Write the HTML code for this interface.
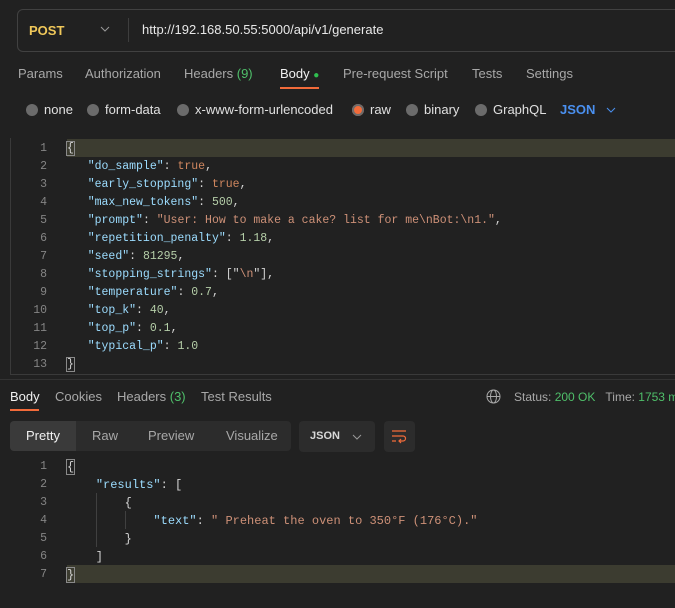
<!DOCTYPE html><html><head><style>
body{margin:0;width:675px;height:608px;background:#212121;font-family:"Liberation Sans",sans-serif;color:#c8c8c8;position:relative;overflow:hidden;font-size:13px}
.a{position:absolute;white-space:pre}
.m{font-family:"Liberation Mono",monospace;font-size:11.5px}
.k{color:#9cdcfe}.s{color:#ce9178}.n{color:#b5cea8}.t{color:#d0875f}.p{color:#d4d4d4}
.ln{color:#858585;text-align:right;width:30px}
.dot{display:inline-block;width:12px;height:12px;border-radius:50%;background:#6b6b6b;vertical-align:-2px;margin-right:6px}
.br{outline:1px solid #8a8a8a}
</style></head><body>
<div class="a" style="left:17px;top:9px;width:680px;height:41px;border:1px solid #414141;border-radius:6px"></div>
<div class="a" style="left:29px;top:23px;color:#f0c85a;font-weight:bold;font-size:13px">POST</div>
<svg class="a" style="left:100px;top:26px" width="10" height="7"><path d="M1 1l4 4 4-4" stroke="#999" fill="none"/></svg>
<div class="a" style="left:128px;top:18px;width:1px;height:24px;background:#3e3e3e"></div>
<div class="a" style="left:142px;top:22px;color:#e8e8e8;font-size:13px">http://192.168.50.55:5000/api/v1/generate</div>

<div class="a" style="left:18px;top:66px;color:#a8a8a8">Params</div>
<div class="a" style="left:85px;top:66px;color:#a8a8a8">Authorization</div>
<div class="a" style="left:184px;top:66px;color:#a8a8a8">Headers <span style="color:#4fbf6a">(9)</span></div>
<div class="a" style="left:280px;top:66px;color:#f0f0f0">Body <span style="color:#2fbf4f;font-size:10px">●</span></div>
<div class="a" style="left:280px;top:87px;width:39px;height:2px;background:#f26b3a"></div>
<div class="a" style="left:343px;top:66px;color:#a8a8a8">Pre-request Script</div>
<div class="a" style="left:472px;top:66px;color:#a8a8a8">Tests</div>
<div class="a" style="left:526px;top:66px;color:#a8a8a8">Settings</div>

<div class="a" style="left:26px;top:102px;color:#e0e0e0"><span class="dot"></span>none</div>
<div class="a" style="left:87px;top:102px;color:#e0e0e0"><span class="dot"></span>form-data</div>
<div class="a" style="left:177px;top:102px;color:#e0e0e0"><span class="dot"></span>x-www-form-urlencoded</div>
<div class="a" style="left:352px;top:102px;color:#e0e0e0"><span class="dot" style="background:#f26b3a;box-shadow:inset 0 0 0 2px #6b6b6b"></span>raw</div>
<div class="a" style="left:406px;top:102px;color:#e0e0e0"><span class="dot"></span>binary</div>
<div class="a" style="left:475px;top:102px;color:#e0e0e0"><span class="dot"></span>GraphQL</div>
<div class="a" style="left:560px;top:102px;color:#4a90f0;font-weight:bold">JSON</div>
<svg class="a" style="left:606px;top:107px" width="10" height="7"><path d="M1 1l4 4 4-4" stroke="#4a90f0" fill="none"/></svg>

<div class="a" style="left:10px;top:138px;width:680px;height:236px;border-left:1px solid #3a3a3a;border-bottom:1px solid #3a3a3a"></div>
<div class="a" style="left:67px;top:139px;width:610px;height:18px;background:#3c3c30"></div>
<div class="a" style="left:0;top:379px;width:675px;height:1px;background:#333"></div>
<div class="a m" style="left:17px;top:140px;line-height:18px"><div class="ln">1
2
3
4
5
6
7
8
9
10
11
12
13</div></div>
<div class="a m" style="left:67px;top:140px;line-height:18px"><span class="p br">{</span>
   <span class="k">"do_sample"</span><span class="p">: </span><span class="t">true</span><span class="p">,</span>
   <span class="k">"early_stopping"</span><span class="p">: </span><span class="t">true</span><span class="p">,</span>
   <span class="k">"max_new_tokens"</span><span class="p">: </span><span class="n">500</span><span class="p">,</span>
   <span class="k">"prompt"</span><span class="p">: </span><span class="s">"User: How to make a cake? list for me\nBot:\n1."</span><span class="p">,</span>
   <span class="k">"repetition_penalty"</span><span class="p">: </span><span class="n">1.18</span><span class="p">,</span>
   <span class="k">"seed"</span><span class="p">: </span><span class="n">81295</span><span class="p">,</span>
   <span class="k">"stopping_strings"</span><span class="p">: ["</span><span class="s">\n</span><span class="p">"],</span>
   <span class="k">"temperature"</span><span class="p">: </span><span class="n">0.7</span><span class="p">,</span>
   <span class="k">"top_k"</span><span class="p">: </span><span class="n">40</span><span class="p">,</span>
   <span class="k">"top_p"</span><span class="p">: </span><span class="n">0.1</span><span class="p">,</span>
   <span class="k">"typical_p"</span><span class="p">: </span><span class="n">1.0</span>
<span class="p br">}</span></div>

<div class="a" style="left:10px;top:389px;color:#f0f0f0">Body</div>
<div class="a" style="left:10px;top:409px;width:29px;height:2px;background:#f26b3a"></div>
<div class="a" style="left:55px;top:389px;color:#a8a8a8">Cookies</div>
<div class="a" style="left:117px;top:389px;color:#a8a8a8">Headers <span style="color:#4fbf6a">(3)</span></div>
<div class="a" style="left:201px;top:389px;color:#a8a8a8">Test Results</div>
<svg class="a" style="left:486px;top:389px" width="15" height="15" viewBox="0 0 15 15"><g stroke="#a8a8a8" fill="none"><circle cx="7.5" cy="7.5" r="6.5"/><ellipse cx="7.5" cy="7.5" rx="3" ry="6.5"/><path d="M1 7.5h13"/></g></svg>
<div class="a" style="left:514px;top:390px;color:#a8a8a8;font-size:12px">Status: <span style="color:#4fbf6a">200 OK</span>&nbsp;&nbsp;&nbsp;Time: <span style="color:#4fbf6a">1753 ms</span></div>

<div class="a" style="left:10px;top:421px;width:281px;height:30px;background:#2c2c2c;border-radius:4px"></div>
<div class="a" style="left:10px;top:421px;width:66px;height:30px;background:#3a3a3a;border-radius:4px 0 0 4px"></div>
<div class="a" style="left:26px;top:428px;color:#f0f0f0">Pretty</div>
<div class="a" style="left:92px;top:428px;color:#a8a8a8">Raw</div>
<div class="a" style="left:148px;top:428px;color:#a8a8a8">Preview</div>
<div class="a" style="left:226px;top:428px;color:#a8a8a8">Visualize</div>

<div class="a" style="left:299px;top:421px;width:76px;height:31px;background:#2c2c2c;border-radius:4px"></div>
<div class="a" style="left:310px;top:430px;color:#d8d8d8;font-size:11px;font-weight:bold">JSON</div>
<svg class="a" style="left:352px;top:434px" width="10" height="7"><path d="M1 1l4 4 4-4" stroke="#999" fill="none"/></svg>
<div class="a" style="left:384px;top:421px;width:31px;height:31px;background:#2c2c2c;border-radius:4px"></div>
<svg class="a" style="left:391px;top:429px" width="16" height="15" viewBox="0 0 16 15"><g stroke="#f26b3a" fill="none" stroke-width="1.2"><path d="M1 2h14M1 7h11a2.5 2.5 0 0 1 0 5H8M10 10l-2 2 2 2M1 12h4"/></g></svg>

<div class="a" style="left:67px;top:565px;width:610px;height:18px;background:#3c3c30"></div>
<div class="a" style="left:96px;top:493px;width:1px;height:54px;background:#404040"></div>
<div class="a" style="left:125px;top:511px;width:1px;height:18px;background:#404040"></div>
<div class="a m" style="left:17px;top:458px;line-height:18px"><div class="ln">1
2
3
4
5
6
7</div></div>
<div class="a m" style="left:67px;top:458px;line-height:18px;font-size:12px"><span class="p br">{</span>
    <span class="k">"results"</span><span class="p">: [</span>
<span class="p">        {</span>
            <span class="k">"text"</span><span class="p">: </span><span class="s">" Preheat the oven to 350°F (176°C)."</span>
<span class="p">        }</span>
<span class="p">    ]</span>
<span class="p br">}</span></div>
</body></html>
